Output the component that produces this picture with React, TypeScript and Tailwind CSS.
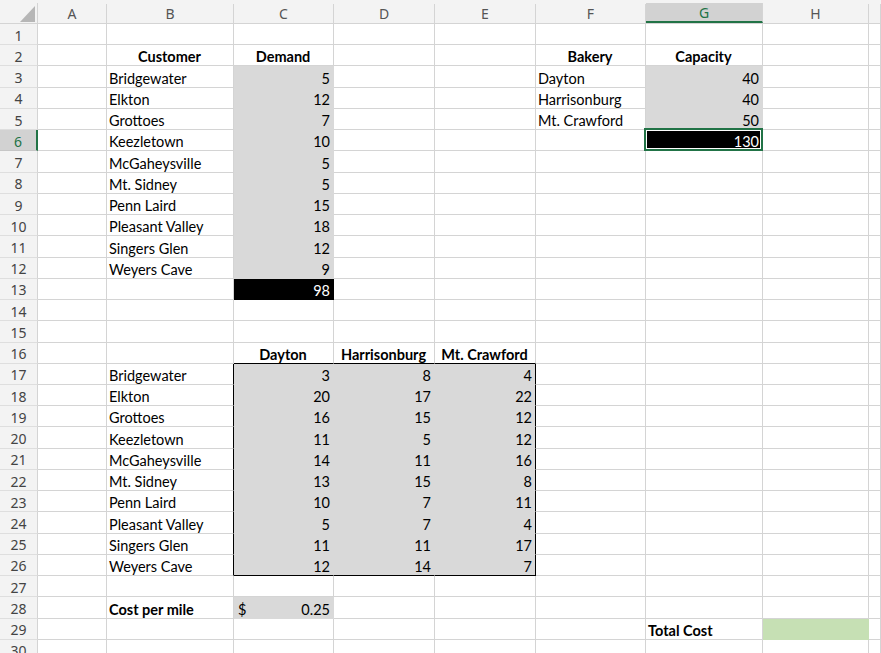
import React from "react";

type Cell = {
  t?: string;
  a?: "l" | "r" | "c";
  b?: boolean;
  fill?: "gray" | "black" | "green";
  sel?: boolean;
  acct?: boolean;
  br?: boolean;
  bb?: boolean;
};

const COLS = [
  { k: "A", w: "w-[69px]" },
  { k: "B", w: "w-[127px]" },
  { k: "C", w: "w-[100px]" },
  { k: "D", w: "w-[101px]" },
  { k: "E", w: "w-[101px]" },
  { k: "F", w: "w-[110px]" },
  { k: "G", w: "w-[117px]" },
  { k: "H", w: "w-[106px]" },
  { k: "I", w: "flex-1" },
];

const customers = [
  "Bridgewater",
  "Elkton",
  "Grottoes",
  "Keezletown",
  "McGaheysville",
  "Mt. Sidney",
  "Penn Laird",
  "Pleasant Valley",
  "Singers Glen",
  "Weyers Cave",
];
const demand = [5, 12, 7, 10, 5, 5, 15, 18, 12, 9];
const miles = [
  [3, 8, 4],
  [20, 17, 22],
  [16, 15, 12],
  [11, 5, 12],
  [14, 11, 16],
  [13, 15, 8],
  [10, 7, 11],
  [5, 7, 4],
  [11, 11, 17],
  [12, 14, 7],
];

// build the sheet contents, keyed by row number then column letter
const sheet: Record<number, Record<string, Cell>> = {};
const put = (r: number, k: string, c: Cell) => {
  sheet[r] = sheet[r] || {};
  sheet[r][k] = { ...(sheet[r][k] || {}), ...c };
};

put(2, "B", { t: "Customer", a: "c", b: true });
put(2, "C", { t: "Demand", a: "c", b: true });
put(2, "F", { t: "Bakery", a: "c", b: true });
put(2, "G", { t: "Capacity", a: "c", b: true });
customers.forEach((n, i) => {
  put(3 + i, "B", { t: n });
  put(3 + i, "C", { t: String(demand[i]), a: "r", fill: "gray" });
});
put(13, "C", { t: "98", a: "r", fill: "black" });
[["Dayton", "40"], ["Harrisonburg", "40"], ["Mt. Crawford", "50"]].forEach(([n, v], i) => {
  put(3 + i, "F", { t: n });
  put(3 + i, "G", { t: v, a: "r", fill: "gray" });
});
put(6, "G", { t: "130", a: "r", fill: "black", sel: true });

put(16, "C", { t: "Dayton", a: "c", b: true, bb: true });
put(16, "D", { t: "Harrisonburg", a: "c", b: true, bb: true });
put(16, "E", { t: "Mt. Crawford", a: "c", b: true, bb: true });
customers.forEach((n, i) => {
  const r = 17 + i;
  put(r, "B", { t: n, br: true });
  ["C", "D", "E"].forEach((k, j) => {
    put(r, k, { t: String(miles[i][j]), a: "r", fill: "gray", br: k === "E", bb: r === 26 });
  });
});
put(28, "B", { t: "Cost per mile", b: true });
put(28, "C", { t: "0.25", a: "r", fill: "gray", acct: true });
put(29, "G", { t: "Total Cost", b: true });
put(29, "H", { fill: "green" });

const ROWS = Array.from({ length: 30 }, (_, i) => i + 1);

function SheetCell({ c, w }: { c?: Cell; w: string }) {
  const fill =
    c?.fill === "gray"
      ? "bg-[#d9d9d9] text-black"
      : c?.fill === "black"
      ? "bg-black text-white"
      : c?.fill === "green"
      ? "bg-[#c6e0b4]"
      : "bg-white text-black";
  const right = c?.br
    ? "border-r-black"
    : c?.fill === "gray"
    ? "border-r-[#d9d9d9]"
    : c?.fill === "black"
    ? "border-r-black"
    : c?.fill === "green"
    ? "border-r-[#c6e0b4]"
    : "border-r-[#d4d4d4]";
  const bottom = c?.bb
    ? "border-b-black"
    : c?.fill === "gray"
    ? "border-b-[#d9d9d9]"
    : c?.fill === "black"
    ? "border-b-black"
    : c?.fill === "green"
    ? "border-b-[#c6e0b4]"
    : "border-b-[#d4d4d4]";
  const align = c?.a === "r" ? "justify-end" : c?.a === "c" ? "justify-center" : "justify-start";

  return (
    <div
      className={`relative ${w} shrink-0 h-full flex items-center ${align} pl-[2px] pr-[3px] pt-[4px] border-r border-b ${right} ${bottom} ${fill} ${c?.b ? "font-bold" : ""} whitespace-nowrap overflow-visible`}
    >
      {c?.acct && <span className="absolute left-[4px] top-[4px] bottom-0 flex items-center">$</span>}
      {c?.t}
      {c?.sel && (
        <div className="absolute -left-[2px] -top-[2px] -right-[1px] -bottom-[1px] border-2 border-[#217346] pointer-events-none">
          <div className="w-full h-full border border-white" />
        </div>
      )}
    </div>
  );
}

export default function App() {
  return (
    <div className="w-[881px] h-[653px] overflow-hidden bg-white font-['Lato','Open_Sans',sans-serif] text-[14.5px] text-black select-none">
      {/* column headers */}
      <div className="flex h-[24px] bg-[#f3f3f3] border-b border-[#d4d4d4] text-[14px] text-[#555] font-['Noto_Sans',sans-serif]">
        <div className="relative w-[38px] shrink-0 flex items-end">
          <div className="w-full h-[20px] border-r border-[#d4d4d4]" />
          <svg className="absolute left-[20px] top-[6px]" width="15" height="16" viewBox="0 0 15 16">
            <polygon points="15,0 15,16 0,16" fill="#b6b6b6" />
          </svg>
        </div>
        {COLS.map((col) => (
          <div key={col.k} className={`${col.w} shrink-0 flex items-end`}>
            <div
              className={`w-full flex items-center justify-center border-r border-[#d4d4d4] ${
                col.k === "G"
                  ? "h-[20px] bg-[#d2d2d2] text-[#217346] border-b-2 border-b-[#217346]"
                  : "h-[19px]"
              }`}
            >
              {col.k === "I" ? "" : col.k}
            </div>
          </div>
        ))}
      </div>

      {ROWS.map((r) => (
        <div key={r} className="flex h-[21.24px]">
          <div
            className={`w-[38px] shrink-0 h-full flex items-center justify-center pt-[2px] text-[14px] font-['Noto_Sans',sans-serif] border-b ${
              r === 6
                ? "bg-[#d2d2d2] text-[#217346] border-r-2 border-r-[#217346] border-b-[#c6c6c6]"
                : "bg-[#f3f3f3] text-[#444] border-r border-r-[#d4d4d4] border-b-[#dedede]"
            }`}
          >
            {r}
          </div>
          {COLS.map((col) => (
            <SheetCell key={col.k} c={sheet[r]?.[col.k]} w={col.w} />
          ))}
        </div>
      ))}
    </div>
  );
}
